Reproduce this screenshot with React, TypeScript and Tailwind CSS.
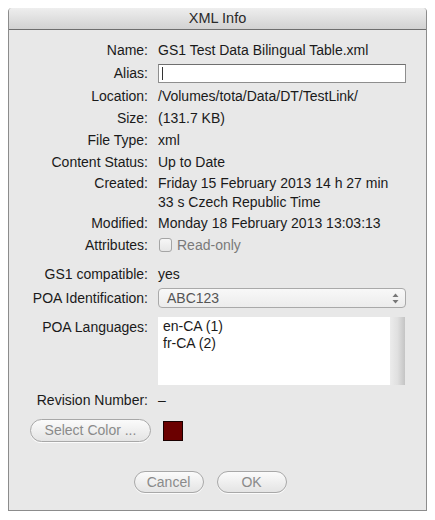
import React from "react";

const font = { fontFamily: '"Lucida Grande", "Liberation Sans", Arial, sans-serif' };

function Row({ label, children, className = "h-[22px]" }: { label: string; children?: React.ReactNode; className?: string }) {
  return (
    <div className={`flex items-center ${className}`}>
      <div className="w-[139px] shrink-0 text-right text-[#1a1a1a]">{label}</div>
      <div className="ml-[10px] flex-1 text-[#1a1a1a]">{children}</div>
    </div>
  );
}

function PillButton({ children, className = "" }: { children: React.ReactNode; className?: string }) {
  return (
    <button className={`h-[22px] rounded-full border border-[#a8a8a8] bg-gradient-to-b from-[#fbfbfb] to-[#e4e4e4] text-[14px] text-[#8a8a8a] shadow-[0_1px_0_rgba(255,255,255,0.8)] ${className}`}>
      {children}
    </button>
  );
}

export default function App() {
  return (
    <div className="min-h-[520px] w-[435px] bg-white pt-[8px] pl-[8px]" style={font}>
      <div className="flex h-[503px] w-[419px] flex-col overflow-hidden rounded-t-[4px] border-x border-b border-[#8c8c8c] bg-[#e8e8e8] text-[14px]">
        {/* title bar */}
        <div className="flex h-[22px] shrink-0 items-center justify-center border-b border-[#6e6e6e] bg-gradient-to-b from-[#eeeeee] to-[#d2d2d2] pt-[1px] text-[14.5px] text-[#2a2a2a]">
          XML Info
        </div>

        <div className="flex flex-col pt-[9px]">
          <Row label="Name:">GS1 Test Data Bilingual Table.xml</Row>
          <div className="flex h-[24px] items-center">
            <div className="w-[139px] shrink-0 text-right text-[#1a1a1a]">Alias:</div>
            <div className="ml-[10px] h-[19px] w-[248px] border border-[#8e8e8e] border-t-[#6f6f6f] bg-white pl-[3px] pt-[2px]">
              <div className="h-[13px] w-px bg-[#333]" />
            </div>
          </div>
          <Row label="Location:">/Volumes/tota/Data/DT/TestLink/</Row>
          <Row label="Size:">(131.7 KB)</Row>
          <Row label="File Type:">xml</Row>
          <Row label="Content Status:">Up to Date</Row>
          <div className="flex h-[39px] items-start pt-[1px] leading-[19px]">
            <div className="w-[139px] shrink-0 text-right text-[#1a1a1a]">Created:</div>
            <div className="ml-[10px] text-[#1a1a1a]">
              Friday 15 February 2013 14 h 27 min
              <br />
              33 s Czech Republic Time
            </div>
          </div>
          <Row label="Modified:">Monday 18 February 2013 13:03:13</Row>
          <Row label="Attributes:">
            <label className="flex items-center gap-[5px] text-[#7a7a7a]">
              <span className="ml-[1px] inline-block h-[14px] w-[13px] rounded-[3px] border border-[#a5a5a5] bg-gradient-to-b from-[#f6f6f6] to-[#e6e6e6]" />
              Read-only
            </label>
          </Row>

          <Row label="GS1 compatible:" className="mt-[7px] h-[22px]">yes</Row>

          <div className="mt-[3px] flex h-[20px] items-center">
            <div className="w-[139px] shrink-0 text-right text-[#1a1a1a]">POA Identification:</div>
            <div className="ml-[10px] flex h-[20px] w-[248px] items-center justify-between rounded-[4px] border border-[#a9a9a9] bg-gradient-to-b from-[#f8f8f8] to-[#ececec] pl-[8px] pr-[6px] text-[#555]">
              <span>ABC123</span>
              <svg width="7" height="11" viewBox="0 0 7 11">
                <path d="M3.5 0.5 L6.5 4 L0.5 4 Z" fill="#777" />
                <path d="M3.5 10.5 L6.5 7 L0.5 7 Z" fill="#777" />
              </svg>
            </div>
          </div>

          <div className="mt-[9px] flex h-[68px] items-start">
            <div className="w-[139px] shrink-0 text-right text-[#1a1a1a]">POA Languages:</div>
            <div className="ml-[10px] flex h-[68px] w-[247px] bg-white">
              <div className="flex-1 pl-[5px] pt-[1px] leading-[17px] text-[#1a1a1a]">
                <div>en-CA (1)</div>
                <div>fr-CA (2)</div>
              </div>
              <div className="w-[15px] bg-gradient-to-r from-[#ececec] via-[#e0e0e0] to-[#c4c4c4]" />
            </div>
          </div>

          <Row label="Revision Number:" className="mt-[4px] h-[22px]">–</Row>

          <div className="mt-[8px] flex items-center">
            <PillButton className="ml-[21px] h-[23px] w-[121px]">Select Color ...</PillButton>
            <div className="ml-[12px] h-[20px] w-[20px] border border-[#1a0000] bg-[#6b0000]" />
          </div>

          <div className="mt-[29px] flex justify-center gap-[13px] pr-[15px]">
            <PillButton className="w-[70px]">Cancel</PillButton>
            <PillButton className="w-[70px]">OK</PillButton>
          </div>
        </div>
      </div>
    </div>
  );
}
